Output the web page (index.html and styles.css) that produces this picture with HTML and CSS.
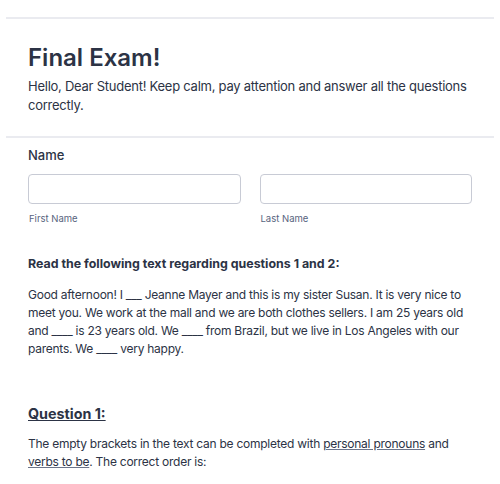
FILE: index.html
```html
<!DOCTYPE html>
<html lang="en">
<head>
    <meta charset="UTF-8">
    <meta name="viewport" content="width=device-width, initial-scale=1.0">
    <title>Final Exam!</title>
    <link rel="stylesheet" href="styles.css">
</head>
<body>
    <div class="form-wrap">
        <div class="form-header">
            <h1>Final Exam!</h1>
            <p>Hello, Dear Student! Keep calm, pay attention and answer all the questions correctly.</p>
        </div>

        <div class="form-body">
            <div class="form-group">
                <label class="main-label">Name</label>
                <div class="name-row">
                    <div class="name-field">
                        <input type="text" id="firstName">
                        <label for="firstName" class="sub-label">First Name</label>
                    </div>
                    <div class="name-field">
                        <input type="text" id="lastName">
                        <label for="lastName" class="sub-label">Last Name</label>
                    </div>
                </div>
            </div>

            <div class="text-block">
                <h3>Read the following text regarding questions 1 and 2:</h3>
                <p>Good afternoon! I ___ Jeanne Mayer and this is my sister Susan. It is very nice to meet you. We work at the mall and we are both clothes sellers. I am 25 years old and ____ is 23 years old. We ____ from Brazil, but we live in Los Angeles with our parents. We ____ very happy.</p>
            </div>

            <div class="question">
                <h2>Question 1:</h2>
                <p>The empty brackets in the text can be completed with <u>personal pronouns</u> and <u>verbs to be</u>. The correct order is:</p>
            </div>
        </div>
    </div>
</body>
</html>
```

FILE: styles.css
```css
body {
    margin: 0;
    font-family: Inter, "Noto Sans", sans-serif;
    color: #2c3345;
    background-color: #fff;
}

.form-wrap {
    margin: 0 6px;
    padding-top: 17px;
}

.form-header {
    border-top: 2px solid #eaebf0;
    border-bottom: 2px solid #eaebf0;
    padding: 24px 22px 21px;
}

.form-header h1 {
    margin: 0;
    font-size: 24px;
    font-weight: 600;
    line-height: 30px;
}

.form-header p {
    margin: 4px 0 0;
    font-size: 13px;
    letter-spacing: -0.25px;
    line-height: 19px;
}

.form-body {
    padding: 8px 22px 0;
}

.main-label {
    display: block;
    font-size: 13px;
    font-weight: 500;
    line-height: 18px;
    margin-bottom: 10px;
}

.name-row {
    display: flex;
    gap: 19px;
}

.name-field {
    flex: 1;
}

.name-field input {
    display: block;
    width: 100%;
    height: 30px;
    box-sizing: border-box;
    border: 1px solid #c8cbd5;
    border-radius: 4px;
    background: #fff;
}

.sub-label {
    display: block;
    font-size: 9.5px;
    line-height: 12px;
    color: #57647e;
    margin-top: 8.5px;
    margin-left: 1px;
}

.text-block h3 {
    margin: 30px 0 0;
    font-size: 12.4px;
    font-weight: 700;
    line-height: 18px;
}

.text-block p,
.question p {
    margin: 13px 0 0;
    font-size: 12px;
    letter-spacing: -0.25px;
    line-height: 18px;
}

.question h2 {
    margin: 46px 0 0;
    font-size: 14.3px;
    font-weight: 700;
    text-decoration: underline;
    line-height: 20px;
}

.question p {
    margin-top: 11px;
}

.question u {
    text-decoration-color: #6b7489;
}
```
